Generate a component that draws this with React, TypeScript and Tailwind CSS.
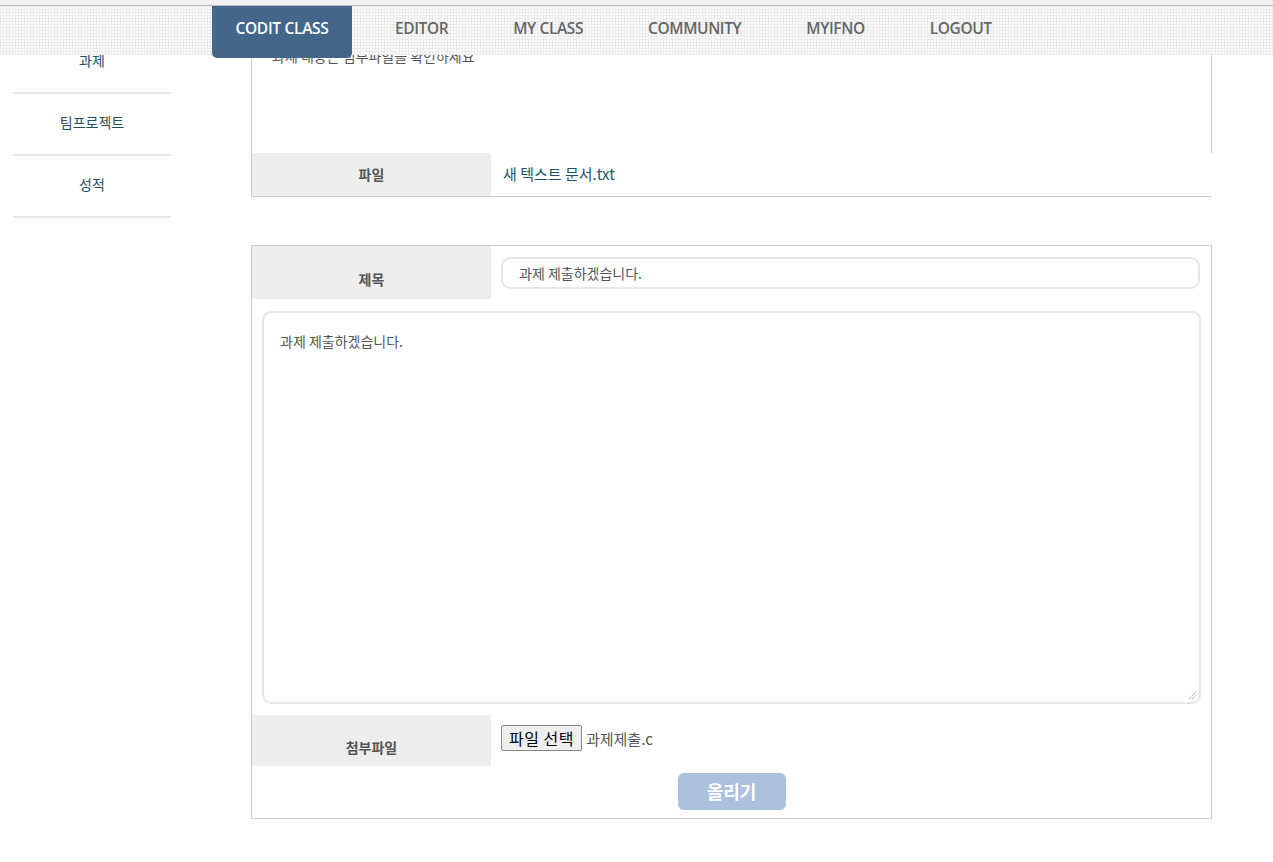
import React from "react";

const kr = { fontFamily: '"Noto Sans CJK KR", "Noto Sans", sans-serif' };
const nav = { fontFamily: '"Open Sans", "Noto Sans", sans-serif' };

export default function App() {
  const items = ["EDITOR", "MY CLASS", "COMMUNITY", "MYIFNO", "LOGOUT"];
  return (
    <div className="relative w-full h-[862px] overflow-hidden bg-white" style={kr}>
      {/* header overlay */}
      <div className="absolute top-0 left-0 right-0 z-10">
        <div className="h-[5px] bg-[#f0f0f0]" />
        <div className="h-px bg-[#bdbdbd]" />
        <div className="relative h-[49px] bg-[repeating-linear-gradient(90deg,#ebebeb_0_1px,transparent_1px_3px),repeating-linear-gradient(0deg,#ebebeb_0_1px,#fbfbfb_1px_3px)]">
          <div className="flex items-start pl-[212px] gap-[21px]" style={nav}>
            <div className="h-[52px] w-[140px] bg-[#44668b] rounded-b-[5px] flex items-center justify-center pb-[6px] text-white text-[15.5px] font-semibold tracking-[-0.3px]">
              CODIT CLASS
            </div>
            {items.map((t) => (
              <div
                key={t}
                className="h-[46px] px-[22px] flex items-center text-[#666] text-[15.5px] font-semibold tracking-[-0.4px]"
              >
                {t}
              </div>
            ))}
          </div>
        </div>
      </div>

      {/* body */}
      <div className="flex">
        {/* sidebar */}
        <div className="ml-[13px] w-[158px] pt-[32px]">
          {["과제", "팀프로젝트", "성적"].map((t) => (
            <div
              key={t}
              className="h-[62px] border-b-2 border-[#e6e6e6] flex items-center justify-center pb-[4px] text-[14px] text-[#1d5161]"
            >
              {t}
            </div>
          ))}
        </div>

        {/* main */}
        <div className="ml-[80px] w-[961px]">
          <div className="border-l border-b border-[#cccccc]">
            <div className="h-[153px] border-r border-[#cccccc] pl-[20px] pt-[46px] text-[14px] text-[#555]">
              과제 내용은 첨부파일을 확인하세요
            </div>
            <div className="flex h-[43px]">
              <div className="w-[239px] bg-[#eeeeee] flex items-center justify-center text-[14px] font-semibold text-[#555]">
                파일
              </div>
              <div className="pl-[12px] flex items-center text-[15px] text-[#1c5666]">
                새 텍스트 문서.txt
              </div>
            </div>
          </div>

          <div className="mt-[48px] border border-[#cccccc] h-[574px] flex flex-col">
            <div className="flex h-[53px]">
              <div className="w-[239px] bg-[#eeeeee] flex items-center justify-center pt-[14px] text-[14px] font-semibold text-[#555]">
                제목
              </div>
              <div className="flex-1 pl-[10px] pr-[11px] pt-[11px]">
                <div className="h-[32px] border-2 border-[#e6e6e6] rounded-[9px] flex items-center pl-[16px] text-[14px] text-[#555]">
                  과제 제출하겠습니다.
                </div>
              </div>
            </div>
            <div className="px-[10px] pt-[12px]">
              <div className="relative h-[393px] border-2 border-[#e6e6e6] rounded-[9px] pl-[16px] pt-[18px] text-[14px] text-[#555]">
                과제 제출하겠습니다.
                <svg className="absolute right-[2px] bottom-[2px]" width="9" height="9" viewBox="0 0 9 9">
                  <line x1="1" y1="8" x2="8" y2="1" stroke="#777" strokeWidth="1" strokeDasharray="1 1" />
                  <line x1="4" y1="8" x2="8" y2="4" stroke="#777" strokeWidth="1" strokeDasharray="1 1" />
                </svg>
              </div>
            </div>
            <div className="flex h-[51px] mt-[11px]">
              <div className="w-[239px] bg-[#eeeeee] flex items-center justify-center pt-[14px] text-[14px] font-semibold text-[#555]">
                첨부파일
              </div>
              <div className="pl-[10px] pt-[10px] flex items-start">
                <div className="h-[26px] px-[7px] border border-[#888] bg-[#efefef] rounded-[2px] flex items-center text-[16px] tracking-[0.5px] text-black">
                  파일 선택
                </div>
                <span className="ml-[4px] pt-[3px] text-[15px] text-[#555]">과제제출.c</span>
              </div>
            </div>
            <div className="flex justify-center mt-[7px]">
              <div className="w-[108px] h-[37px] rounded-[6px] bg-[#abc1dd] flex items-center justify-center text-white text-[18px] font-bold">
                올리기
              </div>
            </div>
          </div>
        </div>
      </div>
    </div>
  );
}
